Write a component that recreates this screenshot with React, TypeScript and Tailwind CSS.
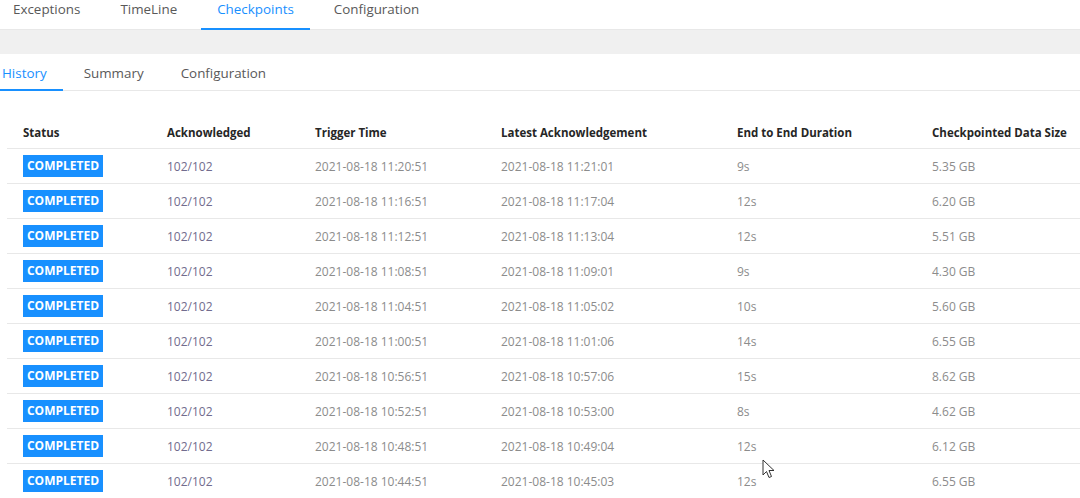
const rows = [
  ['102/102', '2021-08-18 11:20:51', '2021-08-18 11:21:01', '9s', '5.35 GB'],
  ['102/102', '2021-08-18 11:16:51', '2021-08-18 11:17:04', '12s', '6.20 GB'],
  ['102/102', '2021-08-18 11:12:51', '2021-08-18 11:13:04', '12s', '5.51 GB'],
  ['102/102', '2021-08-18 11:08:51', '2021-08-18 11:09:01', '9s', '4.30 GB'],
  ['102/102', '2021-08-18 11:04:51', '2021-08-18 11:05:02', '10s', '5.60 GB'],
  ['102/102', '2021-08-18 11:00:51', '2021-08-18 11:01:06', '14s', '6.55 GB'],
  ['102/102', '2021-08-18 10:56:51', '2021-08-18 10:57:06', '15s', '8.62 GB'],
  ['102/102', '2021-08-18 10:52:51', '2021-08-18 10:53:00', '8s', '4.62 GB'],
  ['102/102', '2021-08-18 10:48:51', '2021-08-18 10:49:04', '12s', '6.12 GB'],
  ['102/102', '2021-08-18 10:44:51', '2021-08-18 10:45:03', '12s', '6.55 GB'],
];

const topTabs = ['Exceptions', 'TimeLine', 'Checkpoints', 'Configuration'];
const subTabs = ['History', 'Summary', 'Configuration'];

export default function App() {
  return (
    <div className="relative h-[498px] w-[1080px] overflow-hidden bg-white font-['Open_Sans','Noto_Sans',sans-serif]">
      {/* main tabs */}
      <div className="flex h-[30px] gap-[8px] border-b border-[#e8e8e8]">
        {topTabs.map((t, i) => (
          <div
            key={t}
            className={
              (i === 0 ? 'pl-[13px] pr-[16px] ' : 'px-[16px] ') +
              (t === 'Checkpoints'
                ? 'h-[30px] border-b-2 border-[#1890ff] text-[13.4px] leading-[19px] text-[#1890ff]'
                : 'h-[30px] text-[13.4px] leading-[19px] text-[#595959]')
            }
          >
            {t}
          </div>
        ))}
      </div>

      <div className="h-[24px] bg-[#f0f0f0]" />

      {/* sub tabs */}
      <div className="flex h-[37px] gap-[5px] border-b border-[#e8e8e8]">
        {subTabs.map((t) => (
          <div
            key={t}
            className={
              t === 'History'
                ? 'h-[37px] border-b-2 border-[#1890ff] pl-[2px] pr-[16px] pt-[10px] text-[13.4px] leading-[19px] text-[#1890ff]'
                : 'h-[37px] px-[16px] pt-[10px] text-[13.4px] leading-[19px] text-[#595959]'
            }
          >
            {t}
          </div>
        ))}
      </div>

      {/* table */}
      <table className="ml-[7px] mt-[18px] w-[1073px] table-fixed border-collapse text-[12px]">
        <thead>
          <tr className="h-[39px] border-b border-[#e8e8e8] text-left text-[11.5px] font-bold text-[#262626]">
            <th className="w-[144px] pb-[6px] pl-[16px] align-bottom">Status</th>
            <th className="w-[148px] pb-[6px] pl-[16px] align-bottom">Acknowledged</th>
            <th className="w-[186px] pb-[6px] pl-[16px] align-bottom">Trigger Time</th>
            <th className="w-[236px] pb-[6px] pl-[16px] align-bottom">Latest Acknowledgement</th>
            <th className="w-[195px] pb-[6px] pl-[16px] align-bottom">End to End Duration</th>
            <th className="pb-[6px] pl-[16px] align-bottom">Checkpointed Data Size</th>
          </tr>
        </thead>
        <tbody>
          {rows.map((r, i) => (
            <tr key={i} className="h-[35px] border-b border-[#e8e8e8] text-[#8c8c8c]">
              <td className="pl-[16px] pt-[1px]">
                <span className="inline-flex h-[22px] w-[80px] items-center justify-center bg-[#1890ff] text-[12px] font-bold text-white">
                  COMPLETED
                </span>
              </td>
              <td className="pl-[16px] pt-[2px] text-[#716c8e]">{r[0]}</td>
              <td className="pl-[16px] pt-[2px]">{r[1]}</td>
              <td className="pl-[16px] pt-[2px]">{r[2]}</td>
              <td className="pl-[16px] pt-[2px]">{r[3]}</td>
              <td className="pl-[16px] pt-[2px]">{r[4]}</td>
            </tr>
          ))}
        </tbody>
      </table>

      {/* mouse cursor */}
      <svg className="absolute left-[762px] top-[459px]" width="14" height="20" viewBox="0 0 14 20">
        <path d="M1 1 L1 16 L4.5 12.5 L7 18.5 L9.5 17.5 L7 11.5 L12 11.5 Z" fill="white" stroke="#333" strokeWidth="1" strokeLinejoin="round" />
      </svg>
    </div>
  );
}
